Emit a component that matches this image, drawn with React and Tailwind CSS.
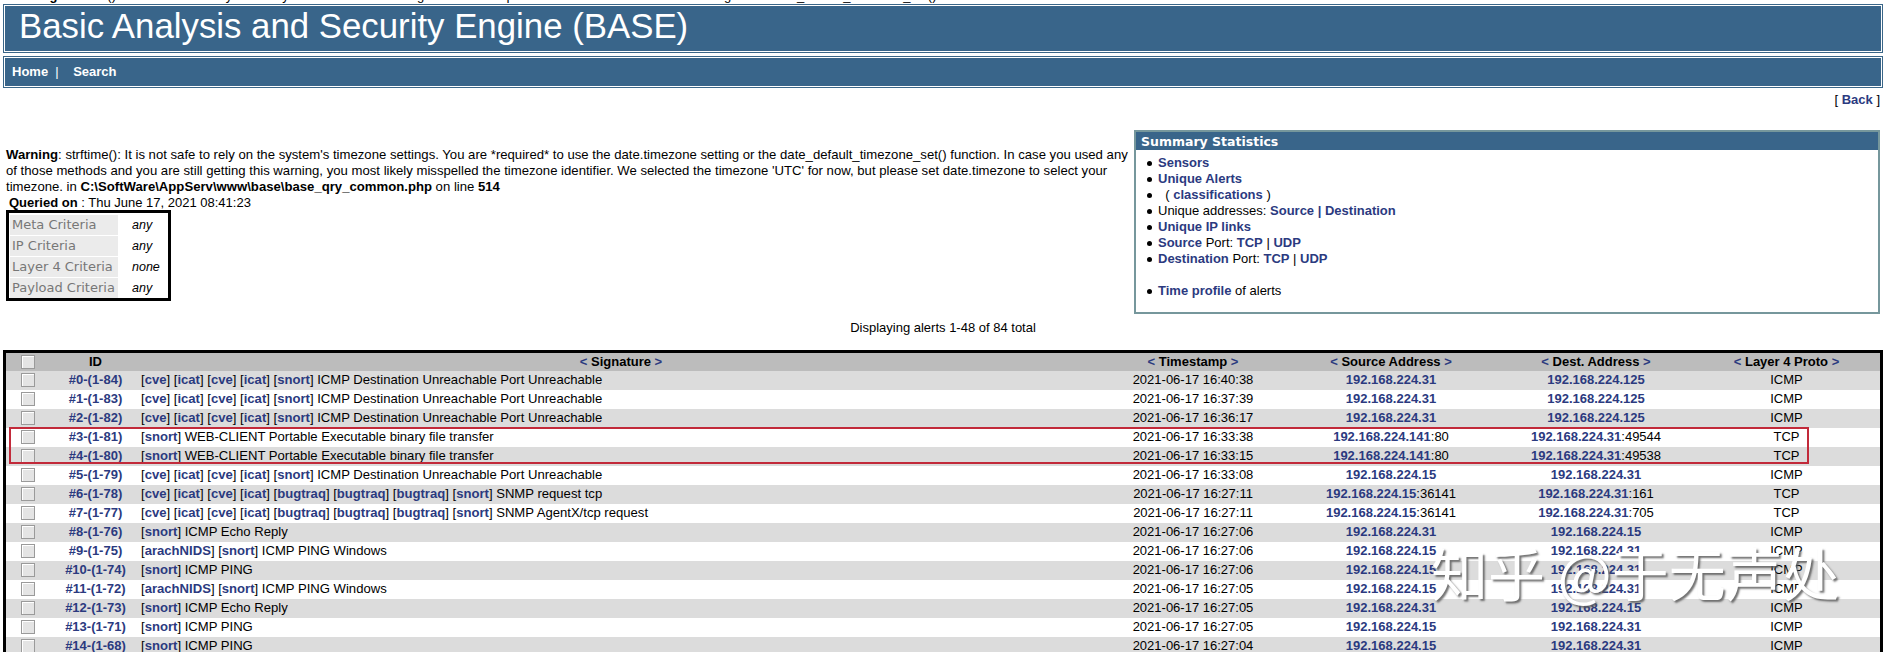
const rows = [
  ["#0-(1-84)", "cve icat cve icat snort", "ICMP Destination Unreachable Port Unreachable", "2021-06-17 16:40:38", "192.168.224.31", "", "192.168.224.125", "", "ICMP"],
  ["#1-(1-83)", "cve icat cve icat snort", "ICMP Destination Unreachable Port Unreachable", "2021-06-17 16:37:39", "192.168.224.31", "", "192.168.224.125", "", "ICMP"],
  ["#2-(1-82)", "cve icat cve icat snort", "ICMP Destination Unreachable Port Unreachable", "2021-06-17 16:36:17", "192.168.224.31", "", "192.168.224.125", "", "ICMP"],
  ["#3-(1-81)", "snort", "WEB-CLIENT Portable Executable binary file transfer", "2021-06-17 16:33:38", "192.168.224.141", ":80", "192.168.224.31", ":49544", "TCP"],
  ["#4-(1-80)", "snort", "WEB-CLIENT Portable Executable binary file transfer", "2021-06-17 16:33:15", "192.168.224.141", ":80", "192.168.224.31", ":49538", "TCP"],
  ["#5-(1-79)", "cve icat cve icat snort", "ICMP Destination Unreachable Port Unreachable", "2021-06-17 16:33:08", "192.168.224.15", "", "192.168.224.31", "", "ICMP"],
  ["#6-(1-78)", "cve icat cve icat bugtraq bugtraq bugtraq snort", "SNMP request tcp", "2021-06-17 16:27:11", "192.168.224.15", ":36141", "192.168.224.31", ":161", "TCP"],
  ["#7-(1-77)", "cve icat cve icat bugtraq bugtraq bugtraq snort", "SNMP AgentX/tcp request", "2021-06-17 16:27:11", "192.168.224.15", ":36141", "192.168.224.31", ":705", "TCP"],
  ["#8-(1-76)", "snort", "ICMP Echo Reply", "2021-06-17 16:27:06", "192.168.224.31", "", "192.168.224.15", "", "ICMP"],
  ["#9-(1-75)", "arachNIDS snort", "ICMP PING Windows", "2021-06-17 16:27:06", "192.168.224.15", "", "192.168.224.31", "", "ICMP"],
  ["#10-(1-74)", "snort", "ICMP PING", "2021-06-17 16:27:06", "192.168.224.15", "", "192.168.224.31", "", "ICMP"],
  ["#11-(1-72)", "arachNIDS snort", "ICMP PING Windows", "2021-06-17 16:27:05", "192.168.224.15", "", "192.168.224.31", "", "ICMP"],
  ["#12-(1-73)", "snort", "ICMP Echo Reply", "2021-06-17 16:27:05", "192.168.224.31", "", "192.168.224.15", "", "ICMP"],
  ["#13-(1-71)", "snort", "ICMP PING", "2021-06-17 16:27:05", "192.168.224.15", "", "192.168.224.31", "", "ICMP"],
  ["#14-(1-68)", "snort", "ICMP PING", "2021-06-17 16:27:04", "192.168.224.15", "", "192.168.224.31", "", "ICMP"],
];

const L = ({ children, bold = true }) => (
  <a className={`text-[#2b3a7f] ${bold ? "font-bold" : ""}`}>{children}</a>
);

const Box = () => (
  <span className="block w-[14px] h-[14px] ml-[15px] border border-[#9a9a9a] bg-[#e4e4e4] shadow-[inset_1px_1px_0_#fff]" />
);

const Sort = ({ children }) => (
  <span className="font-bold text-black">
    <span className="text-[#2b3a7f]">&lt; </span>
    {children}
    <span className="text-[#2b3a7f]"> &gt;</span>
  </span>
);

const grid = "grid grid-cols-[46px_87px_964px_180px_216px_194px_1fr] items-center";

const Li = ({ children }) => (
  <li className="flex h-[16px] items-center">
    <span className="w-[5px] h-[5px] rounded-full bg-black ml-[11px] mr-[6px] shrink-0" />
    <span>{children}</span>
  </li>
);

const Crit = ({ label, value }) => (
  <div className="flex items-center h-[21px]">
    <span className="w-[108px] h-[20px] px-[2px] bg-[#ebebeb] text-[#777] font-['DejaVu_Sans',sans-serif] text-[13px] leading-[20px] whitespace-nowrap overflow-hidden">{label}</span>
    <span className="ml-[14px] italic text-[12.5px]">{value}</span>
  </div>
);

export default function App() {
  return (
    <div className="relative w-[1886px] h-[652px] overflow-hidden bg-white text-black font-['Liberation_Sans',Arial,sans-serif] text-[13px] leading-[16px]">
      <div className="h-[4px] overflow-hidden relative">
        <p className="whitespace-nowrap -mt-[12px] pl-[6px]"><b>Warning</b>: strftime(): It is not safe to rely on the system's timezone settings. You are *required* to use the date.timezone setting or the date_default_timezone_set() function.</p>
      </div>
      <header className="mx-[3px] border border-[#3a6688] p-[1px]">
        <div className="h-[45px] bg-[#39658a] text-white text-[34.8px] leading-[40px] pl-[14px] whitespace-nowrap">Basic Analysis and Security Engine (BASE)</div>
      </header>
      <nav className="mt-[3px] mx-[3px] border border-[#3a6688] p-[1px]">
        <div className="h-[28px] bg-[#39658a] text-white font-bold leading-[28px] pl-[7px]">
          Home <span className="font-normal">&nbsp;|&nbsp;&nbsp;&nbsp;</span> Search
        </div>
      </nav>
      <div className="h-[20px] mt-[4px] pr-[6px] text-right"><span>[ </span><L>Back</L><span> ]</span></div>

      <div className="flex h-[221px] mt-[18px]">
        <div className="w-[1127px] pl-[6px] pt-[17px] shrink-0">
          <p className="w-[1130px] text-[13.15px]">
            <b>Warning</b>: strftime(): It is not safe to rely on the system's timezone settings. You are *required* to use the date.timezone setting or the date_default_timezone_set() function. In case you used any of those methods and you are still getting this warning, you most likely misspelled the timezone identifier. We selected the timezone 'UTC' for now, but please set date.timezone to select your timezone. in <b>C:\SoftWare\AppServ\www\base\base_qry_common.php</b> on line <b>514</b>
          </p>
          <p className="pl-[3px]"><b>Queried on</b> : Thu June 17, 2021 08:41:23</p>
          <div className="mt-[-1px] w-[165px] h-[91px] border-[3px] border-black pl-[1px] pt-[1px]">
            <Crit label="Meta Criteria" value="any" />
            <Crit label="IP Criteria" value="any" />
            <Crit label="Layer 4 Criteria" value="none" />
            <Crit label="Payload Criteria" value="any" />
          </div>
        </div>
        <aside className="w-[746px] ml-[7px] h-[184px] border-[2px] border-[#76979c] self-start">
          <div className="h-[18px] bg-[#39658a] text-white font-bold font-['DejaVu_Sans',sans-serif] text-[12.5px] leading-[19px] pl-[5px]">Summary Statistics</div>
          <ul className="mt-[5px]">
            <Li><L>Sensors</L></Li>
            <Li><L>Unique Alerts</L></Li>
            <Li>&nbsp;&nbsp;( <L>classifications</L> )</Li>
            <Li>Unique addresses: <L>Source | Destination</L></Li>
            <Li><L>Unique IP links</L></Li>
            <Li><L>Source</L> Port: <L>TCP</L> | <L>UDP</L></Li>
            <Li><L>Destination</L> Port: <L>TCP</L> | <L>UDP</L></Li>
            <li className="h-[16px]" />
            <Li><L>Time profile</L> of alerts</Li>
          </ul>
        </aside>
      </div>

      <p className="text-center -mt-[31px] h-[16px]">Displaying alerts 1-48 of 84 total</p>

      <section className="relative mt-[14px] mx-[3px] border-t-[3px] border-x-[3px] border-black">
        <div className={`${grid} bg-[#bcbcbc] h-[18px]`}>
          <Box />
          <span className="text-center font-bold">ID</span>
          <span className="text-center"><Sort>Signature</Sort></span>
          <span className="text-center"><Sort>Timestamp</Sort></span>
          <span className="text-center"><Sort>Source Address</Sort></span>
          <span className="text-center"><Sort>Dest. Address</Sort></span>
          <span className="text-center"><Sort>Layer 4 Proto</Sort></span>
        </div>
        {rows.map((r, i) => (
          <div key={r[0]} className={`${grid} h-[19px] pb-[1px] ${i % 2 === 0 ? "bg-[#dcdcdc]" : "bg-white"}`}>
            <Box />
            <span className="text-center"><L>{r[0]}</L></span>
            <span className="pl-[2px] whitespace-nowrap text-[13.1px]">
              {r[1].split(" ").map((t, k) => (
                <span key={k}>[<L>{t}</L>] </span>
              ))}
              {r[2]}
            </span>
            <span className="text-center">{r[3]}</span>
            <span className="text-center"><L>{r[4]}</L>{r[5]}</span>
            <span className="text-center"><L>{r[6]}</L>{r[7]}</span>
            <span className="text-center">{r[8]}</span>
          </div>
        ))}
        <div className="absolute left-[3px] top-[74px] w-[1800px] h-[37px] border-2 border-[#c22a3a]" />
      </section>

      <div className="absolute left-[1431px] top-[536px] text-[57px] leading-[70px] text-white whitespace-nowrap font-['Noto_Sans_CJK_SC',sans-serif] font-normal [text-shadow:2px_2px_2px_rgba(90,90,90,0.85)]">
        知乎 @于无声处
      </div>
    </div>
  );
}
